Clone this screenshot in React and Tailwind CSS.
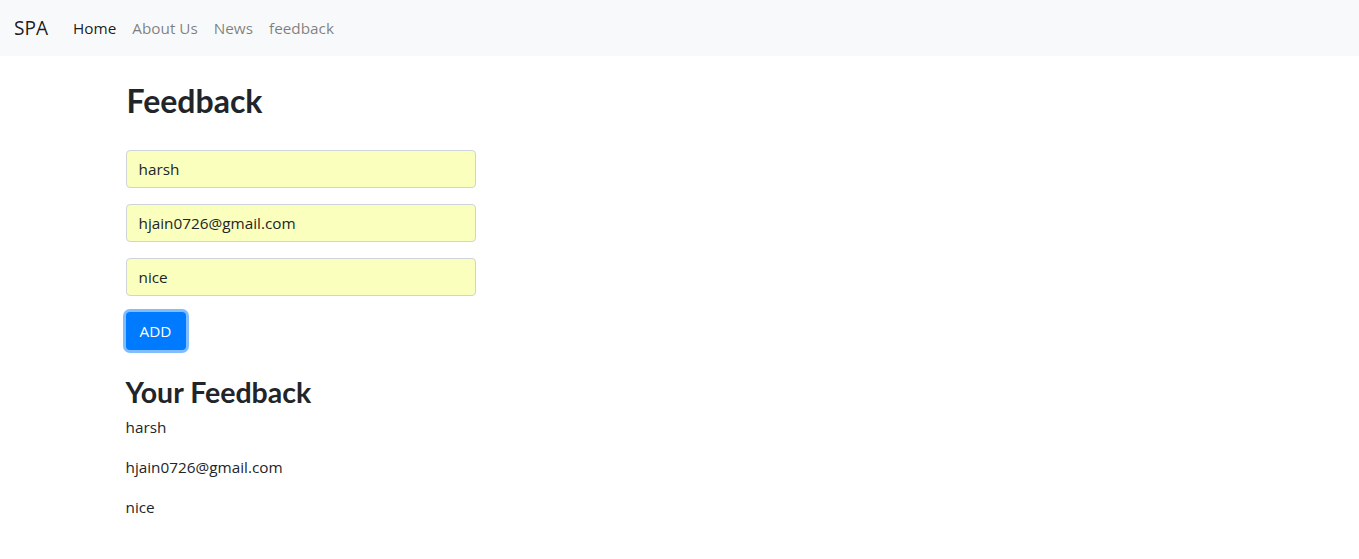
import React from "react";

export default function App() {
  return (
    <div className="min-h-[559px] bg-white text-[#212529] font-['Open_Sans',sans-serif]">
      <nav className="h-[56px] bg-[#f8f9fa] flex items-center pl-[14px] pr-4">
        <span className="text-[19.1px] leading-[30px] mr-[17px] text-[rgba(0,0,0,0.9)]">SPA</span>
        <a className="px-2 text-[15.3px] leading-[24px] text-[rgba(0,0,0,0.9)]">Home</a>
        <a className="px-2 text-[15.3px] leading-[24px] text-[rgba(0,0,0,0.5)]">About Us</a>
        <a className="px-2 text-[15.3px] leading-[24px] text-[rgba(0,0,0,0.5)]">News</a>
        <a className="px-2 text-[15.3px] leading-[24px] text-[rgba(0,0,0,0.5)]">feedback</a>
      </nav>
      <div className="w-[1140px] mx-auto px-[16px]">
        <h1 className="mt-[21px] h-[48px] leading-[48px] text-[32px] font-bold font-['Lato',sans-serif] pl-[1px]">Feedback</h1>
        <div className="mt-[25px] flex flex-col gap-4">
          <div className="w-[350px] h-[38px] border border-[#ced4da] rounded-[4px] bg-[#faffbd] px-3 flex items-center text-[15.3px]">harsh</div>
          <div className="w-[350px] h-[38px] border border-[#ced4da] rounded-[4px] bg-[#faffbd] px-3 flex items-center text-[15.3px]">hjain0726@gmail.com</div>
          <div className="w-[350px] h-[38px] border border-[#ced4da] rounded-[4px] bg-[#faffbd] px-3 flex items-center text-[15.3px]">nice</div>
          <div>
            <button className="w-[60px] h-[38px] bg-[#007bff] text-white rounded-[4px] text-[15.3px] shadow-[0_0_0_3px_rgba(0,123,255,0.5)]">ADD</button>
          </div>
        </div>
        <h2 className="mt-[23px] h-[38px] leading-[38px] text-[28.5px] font-bold font-['Lato',sans-serif]">Your Feedback</h2>
        <div className="mt-[4px] text-[15.3px] leading-[24px]">
          <p className="mb-4">harsh</p>
          <p className="mb-4">hjain0726@gmail.com</p>
          <p className="mb-4">nice</p>
        </div>
      </div>
    </div>
  );
}
